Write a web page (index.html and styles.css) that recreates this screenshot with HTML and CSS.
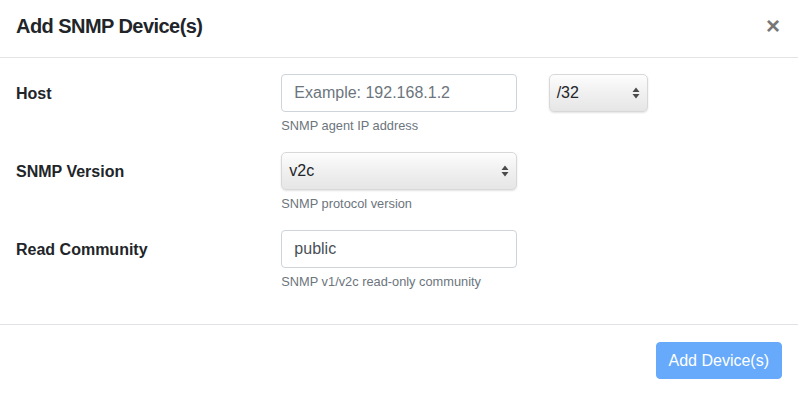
FILE: index.html
```html
<!DOCTYPE html>
<html>
<head>
<meta charset="utf-8">
<link rel="stylesheet" href="styles.css">
</head>
<body>
<div class="modal">
  <div class="modal-header">
    <h5 class="modal-title">Add SNMP Device(s)</h5>
    <button class="close" type="button">×</button>
  </div>
  <div class="modal-body">
    <div class="form-group row">
      <label class="col-label">Host</label>
      <div class="col-field">
        <input class="form-control" type="text" placeholder="Example: 192.168.1.2">
        <small class="help">SNMP agent IP address</small>
      </div>
      <div class="col-mask">
        <div class="select"><span>/32</span><span class="arrows"><svg width="8" height="12" viewBox="0 0 8 12"><path d="M4 0.5 L7.5 5 H0.5 Z M4 11.5 L7.5 7 H0.5 Z" fill="#4a4a4a"/></svg></span></div>
      </div>
    </div>
    <div class="form-group row">
      <label class="col-label">SNMP Version</label>
      <div class="col-field">
        <div class="select"><span>v2c</span><span class="arrows"><svg width="8" height="12" viewBox="0 0 8 12"><path d="M4 0.5 L7.5 5 H0.5 Z M4 11.5 L7.5 7 H0.5 Z" fill="#4a4a4a"/></svg></span></div>
        <small class="help">SNMP protocol version</small>
      </div>
    </div>
    <div class="form-group row">
      <label class="col-label">Read Community</label>
      <div class="col-field">
        <input class="form-control" type="text" value="public">
        <small class="help">SNMP v1/v2c read-only community</small>
      </div>
    </div>
  </div>
  <div class="modal-footer">
    <button class="btn" type="button" disabled>Add Device(s)</button>
  </div>
</div>
</body>
</html>
```
FILE: styles.css
```css
* { box-sizing: border-box; }
html, body { margin: 0; padding: 0; background: #fff; }
body {
  font-family: "Liberation Sans", Arial, sans-serif;
  font-size: 16px;
  line-height: 1.5;
  color: #212529;
  width: 798px;
  height: 394px;
  overflow: hidden;
}
.modal { width: 798px; }
.modal-header {
  display: flex;
  justify-content: space-between;
  align-items: center;
  padding: 14px 16px 18px 16px;
  height: 58px;
  border-bottom: 1px solid #e3e3e3;
}
.modal-title {
  margin: 0;
  font-size: 20px;
  font-weight: 700;
  line-height: 25px;
  letter-spacing: -0.55px;
  color: #212529;
}
.close {
  border: 0;
  background: transparent;
  padding: 0;
  font-family: "Liberation Sans", Arial, sans-serif;
  font-size: 24px;
  font-weight: 700;
  line-height: 1;
  color: #777;
  margin-right: 2px;
  margin-top: -2px;
}
.modal-body { padding: 16px 16px 16px 16px; }
.row { display: flex; margin: 0 -15px; }
.form-group { margin-bottom: 16px; }
.col-label {
  width: 265.33px;
  padding: 8px 15px 0 15px;
  font-weight: 700;
  line-height: 24px;
}
.col-field { width: 265.33px; padding: 0 15px; display: flex; flex-direction: column; }
.col-mask { width: 132.67px; padding: 0 16px 0 17px; }
.form-control {
  display: block;
  width: 100%;
  height: 38px;
  padding: 6px 12px;
  font-family: "Liberation Sans", Arial, sans-serif;
  font-size: 16px;
  line-height: 24px;
  color: #495057;
  background: #fff;
  border: 1px solid #ced4da;
  border-radius: 4px;
  outline: none;
}
.form-control::placeholder { color: #6c757d; }
.select {
  display: flex;
  justify-content: space-between;
  align-items: center;
  height: 38px;
  padding: 0 7px 0 7px;
  font-size: 16px;
  color: #212529;
  border: 1px solid #d8d8d8;
  border-radius: 5px;
  background: linear-gradient(#fdfdfd, #f0f0f0 50%, #e6e6e6);
  box-shadow: 0 1px 2px rgba(0,0,0,0.12);
}
.arrows { display: flex; align-items: center; }
.help {
  display: block;
  margin-top: 4px;
  font-size: 12.8px;
  line-height: 20px;
  color: #6c757d;
}
.modal-footer {
  display: flex;
  justify-content: flex-end;
  padding: 17px 16px 16px 16px;
  border-top: 1px solid #e3e1e8;
}
.btn {
  height: 37px;
  padding: 6px 12px;
  font-family: "Liberation Sans", Arial, sans-serif;
  font-size: 16px;
  line-height: 24px;
  color: #fff;
  background: #67aafb;
  border: 1px solid #67aafb;
  border-radius: 4px;
}
```
